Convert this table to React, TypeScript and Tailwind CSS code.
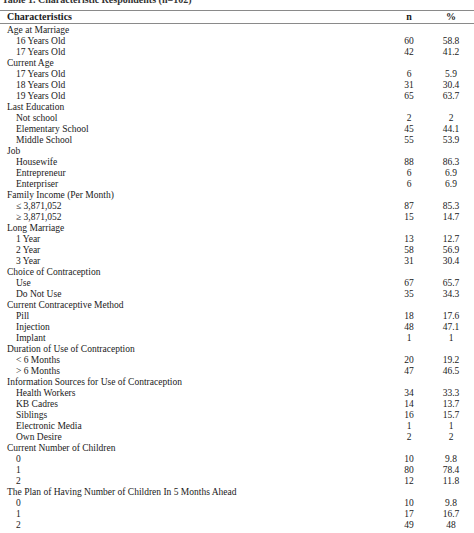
const groups: { label: string; rows: [string, string, string][] }[] = [
  { label: "Age at Marriage", rows: [["16 Years Old", "60", "58.8"], ["17 Years Old", "42", "41.2"]] },
  { label: "Current Age", rows: [["17 Years Old", "6", "5.9"], ["18 Years Old", "31", "30.4"], ["19 Years Old", "65", "63.7"]] },
  { label: "Last Education", rows: [["Not school", "2", "2"], ["Elementary School", "45", "44.1"], ["Middle School", "55", "53.9"]] },
  { label: "Job", rows: [["Housewife", "88", "86.3"], ["Entrepreneur", "6", "6.9"], ["Enterpriser", "6", "6.9"]] },
  { label: "Family Income (Per Month)", rows: [["≤ 3,871,052", "87", "85.3"], ["≥ 3,871,052", "15", "14.7"]] },
  { label: "Long Marriage", rows: [["1 Year", "13", "12.7"], ["2 Year", "58", "56.9"], ["3 Year", "31", "30.4"]] },
  { label: "Choice of Contraception", rows: [["Use", "67", "65.7"], ["Do Not Use", "35", "34.3"]] },
  { label: "Current Contraceptive Method", rows: [["Pill", "18", "17.6"], ["Injection", "48", "47.1"], ["Implant", "1", "1"]] },
  { label: "Duration of Use of Contraception", rows: [["< 6 Months", "20", "19.2"], ["> 6 Months", "47", "46.5"]] },
  {
    label: "Information Sources for Use of Contraception",
    rows: [["Health Workers", "34", "33.3"], ["KB Cadres", "14", "13.7"], ["Siblings", "16", "15.7"], ["Electronic Media", "1", "1"], ["Own Desire", "2", "2"]],
  },
  { label: "Current Number of Children", rows: [["0", "10", "9.8"], ["1", "80", "78.4"], ["2", "12", "11.8"]] },
  { label: "The Plan of Having Number of Children In 5 Months Ahead", rows: [["0", "10", "9.8"], ["1", "17", "16.7"], ["2", "49", "48"]] },
];

const Row = ({ label, n, pct, indent }: { label: string; n?: string; pct?: string; indent?: boolean }) => (
  <div className="flex h-[11px] items-center leading-[11px]">
    <span className={`flex-1 whitespace-nowrap ${indent ? "pl-[16px]" : "pl-[7px]"}`}>{label}</span>
    <span className="w-[30px] text-center">{n}</span>
    <span className="ml-[12px] w-[30px] text-center">{pct}</span>
    <span className="w-[8px]" />
  </div>
);

export default function App() {
  return (
    <div className="h-[533px] w-[474px] overflow-hidden bg-white text-[9.5px] text-[#1a1a1a] [font-family:'Liberation_Serif',serif]">
      <div className="-mt-[6px] h-[11px] whitespace-nowrap pl-[2px] text-[10px] font-bold leading-[11px] text-[#333]">
        Table 1. Characteristic Respondents (n=102)
      </div>
      <div className="mt-[5px] border-y border-[#8a8a8a]">
        <div className="flex h-[12px] items-center text-[10px] font-bold leading-[12px]">
          <span className="flex-1 pl-[7px]">Characteristics</span>
          <span className="w-[30px] text-center">n</span>
          <span className="ml-[12px] w-[30px] text-center">%</span>
          <span className="w-[8px]" />
        </div>
      </div>
      <div className="pt-[1px]">
        {groups.map((g) => (
          <div key={g.label}>
            <Row label={g.label} />
            {g.rows.map(([l, n, p], i) => (
              <Row key={i} label={l} n={n} pct={p} indent />
            ))}
          </div>
        ))}
      </div>
    </div>
  );
}
